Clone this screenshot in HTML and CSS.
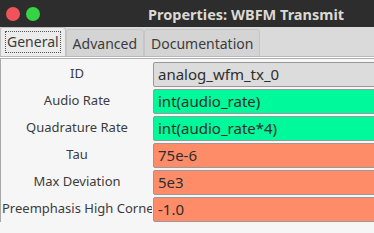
FILE: index.html
```html
<!DOCTYPE html>
<html lang="en">
<head>
    <meta charset="UTF-8">
    <title>Properties: WBFM Transmit</title>
    <link rel="stylesheet" href="styles.css">
</head>
<body>
    <div class="window">
        <div class="titlebar">
            <span class="dot dot-close"></span>
            <span class="dot dot-max"></span>
            <span class="title">Properties: WBFM Transmit</span>
        </div>

        <div class="tabs">
            <div class="tab active"><span class="focus">General</span></div>
            <div class="tab">Advanced</div>
            <div class="tab">Documentation</div>
        </div>

        <div class="panel">
            <div class="param">
                <div class="label">ID</div>
                <div class="entry readonly">analog_wfm_tx_0</div>
            </div>
            <div class="param">
                <div class="label">Audio Rate</div>
                <div class="entry int">int(audio_rate)</div>
            </div>
            <div class="param">
                <div class="label">Quadrature Rate</div>
                <div class="entry int">int(audio_rate*4)</div>
            </div>
            <div class="param">
                <div class="label">Tau</div>
                <div class="entry float">75e-6</div>
            </div>
            <div class="param">
                <div class="label">Max Deviation</div>
                <div class="entry float">5e3</div>
            </div>
            <div class="param">
                <div class="label">Preemphasis High Corner</div>
                <div class="entry float">-1.0</div>
            </div>
        </div>
    </div>
</body>
</html>
```

FILE: styles.css
```css
body {
    margin: 0;
    padding: 0;
    overflow: hidden;
    font-family: 'Noto Sans', 'DejaVu Sans', sans-serif;
    background: #f6f6f6;
}

.window {
    width: 374px;
    height: 233px;
    overflow: hidden;
}

/* Title bar */
.titlebar {
    height: 27px;
    background-color: #2d2d2d;
    display: flex;
    align-items: center;
}

.dot {
    width: 14px;
    height: 14px;
    border-radius: 50%;
    margin-left: 6px;
}

.dot-close {
    background-color: #f2525a;
}

.dot-max {
    background-color: #34d444;
}

.title {
    margin-left: 108px;
    color: #dcd9d2;
    font-weight: bold;
    font-size: 14.5px;
    white-space: nowrap;
}

/* Notebook tabs */
.tabs {
    height: 29px;
    background-color: #dadada;
    border-bottom: 1px solid #b8b8b8;
    display: flex;
    align-items: flex-end;
    box-shadow: 0 1px 0 #ffffff, 0 2px 0 #b0b0b0;
}

.tab {
    height: 26px;
    padding: 0 6px;
    font-size: 14px;
    color: #3c3c3c;
    background-color: #d4d4d4;
    border: 1px solid #c6c6c6;
    border-bottom: none;
    border-radius: 3px 3px 0 0;
    display: flex;
    align-items: center;
}

.tab.active {
    height: 28px;
    padding: 0 4px;
    background-color: #ececec;
    border-color: #c0c0c0;
}

.focus {
    border: 1px dotted #555;
    padding: 0 1px;
    line-height: 20px;
}

/* Parameter panel */
.panel {
    margin-top: 2px;
    padding-top: 3px;
    border-left: 1px solid #a8a8a8;
    display: flex;
    flex-direction: column;
    gap: 2px;
}

.param {
    display: flex;
    align-items: center;
    height: 25px;
}

.label {
    width: 150px;
    margin-left: 1px;
    flex-shrink: 0;
    text-align: center;
    white-space: nowrap;
    overflow: hidden;
    font-size: 13px;
    color: #3c3c3c;
    padding-bottom: 3px;
}

.entry {
    width: 400px;
    height: 23px;
    margin-left: 1px;
    flex-shrink: 0;
    padding-left: 4px;
    font-size: 15px;
    line-height: 23px;
    color: #2e2e2e;
    border: 1px solid #999;
    border-radius: 2px;
}

.readonly {
    background-color: #dcdcdc;
}

.int {
    background-color: #00f99a;
}

.float {
    background-color: #ff8c69;
}
```
